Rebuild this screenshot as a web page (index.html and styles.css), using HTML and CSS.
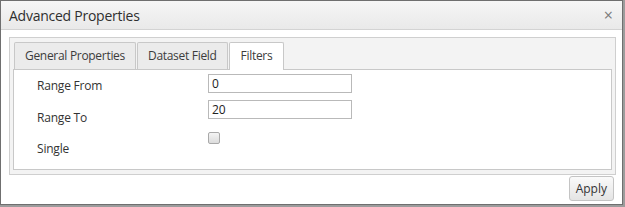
FILE: index.html
```html
<!DOCTYPE html>
<html lang="en">
<head>
    <meta charset="UTF-8">
    <title>Advanced Properties</title>
    <link rel="stylesheet" href="styles.css">
</head>
<body>

    <div class="dialog">
        <div class="titlebar">
            <span class="title">Advanced Properties</span>
            <span class="close">&times;</span>
        </div>

        <div class="content">
            <div class="tabs">
                <ul class="tab-nav">
                    <li class="tab">General Properties</li>
                    <li class="tab">Dataset Field</li>
                    <li class="tab active">Filters</li>
                </ul>
                <div class="panel">
                    <div class="row row-from">
                        <label for="rangeFrom">Range From</label>
                        <input type="text" id="rangeFrom" value="0">
                    </div>
                    <div class="row row-to">
                        <label for="rangeTo">Range To</label>
                        <input type="text" id="rangeTo" value="20">
                    </div>
                    <div class="row row-single">
                        <label for="single">Single</label>
                        <span class="check" id="single"></span>
                    </div>
                </div>
            </div>
        </div>

        <div class="footer">
            <button type="button" class="btn">Apply</button>
        </div>
    </div>

</body>
</html>
```

FILE: styles.css
```css
body {
    margin: 0;
    background-color: #9c9c9c;
    font-family: "Open Sans", "DejaVu Sans", sans-serif;
    color: #333;
}
.dialog {
    width: 621px;
    height: 203px;
    border: 1px solid #6f6f6f;
    background-color: #fff;
}
.titlebar {
    height: 28px;
    display: flex;
    align-items: center;
    justify-content: space-between;
    padding: 0 9px 0 8px;
    background: linear-gradient(#f6f6f6, #e9e9e9);
    border-bottom: 1px solid #d3d3d3;
}
.title {
    font-size: 14px;
    letter-spacing: -0.25px;
    color: #2f2f2f;
}
.close {
    font-size: 16px;
    color: #7a7a7a;
}
.content {
    padding: 7px 6px 0 8px;
}
.tabs {
    border: 1px solid #cfcfcf;
    background-color: #f3f3f3;
    padding: 4px 3px 4px 3px;
}
.tab-nav {
    display: flex;
    list-style: none;
    margin: 0;
    padding: 0 0 0 1px;
}
.tab {
    height: 26px;
    line-height: 26px;
    padding: 0 10px;
    margin-right: 1px;
    font-size: 12px;
    letter-spacing: -0.3px;
    color: #3c3c3c;
    background-color: #ebebeb;
    border: 1px solid #c8c8c8;
    border-bottom: none;
    border-radius: 2px 2px 0 0;
}
.tab.active {
    background-color: #fff;
    height: 27px;
    margin-bottom: -1px;
    padding: 0 11px;
    position: relative;
}
.panel {
    height: 101px;
    box-sizing: border-box;
    background-color: #fff;
    border: 1px solid #c8c8c8;
    padding: 4px 0 0 23px;
}
.row {
    display: flex;
    align-items: flex-start;
}
.row label {
    width: 171px;
    font-size: 12px;
    letter-spacing: -0.2px;
}
.row-from {
    height: 26px;
}
.row-from label {
    padding-top: 3px;
}
.row-to {
    height: 32px;
}
.row-to label {
    padding-top: 9px;
}
.row-single label {
    padding-top: 8px;
}
.row input {
    width: 144px;
    height: 19px;
    box-sizing: border-box;
    border: 1px solid #b9b9b9;
    padding: 0 3px;
    font-family: inherit;
    font-size: 12px;
    color: #222;
}
.check {
    display: block;
    width: 10px;
    height: 10px;
    border: 1px solid #a9a9a9;
    border-radius: 2px;
    background: linear-gradient(#f4f4f4, #dcdcdc);
}
.footer {
    display: flex;
    justify-content: flex-end;
    padding: 1px 8px 0 0;
}
.btn {
    height: 25px;
    padding: 0 6px;
    font-family: inherit;
    font-size: 12px;
    color: #333;
    background: linear-gradient(#fafafa, #e4e4e4);
    border: 1px solid #c4c4c4;
    border-radius: 3px;
}
```
